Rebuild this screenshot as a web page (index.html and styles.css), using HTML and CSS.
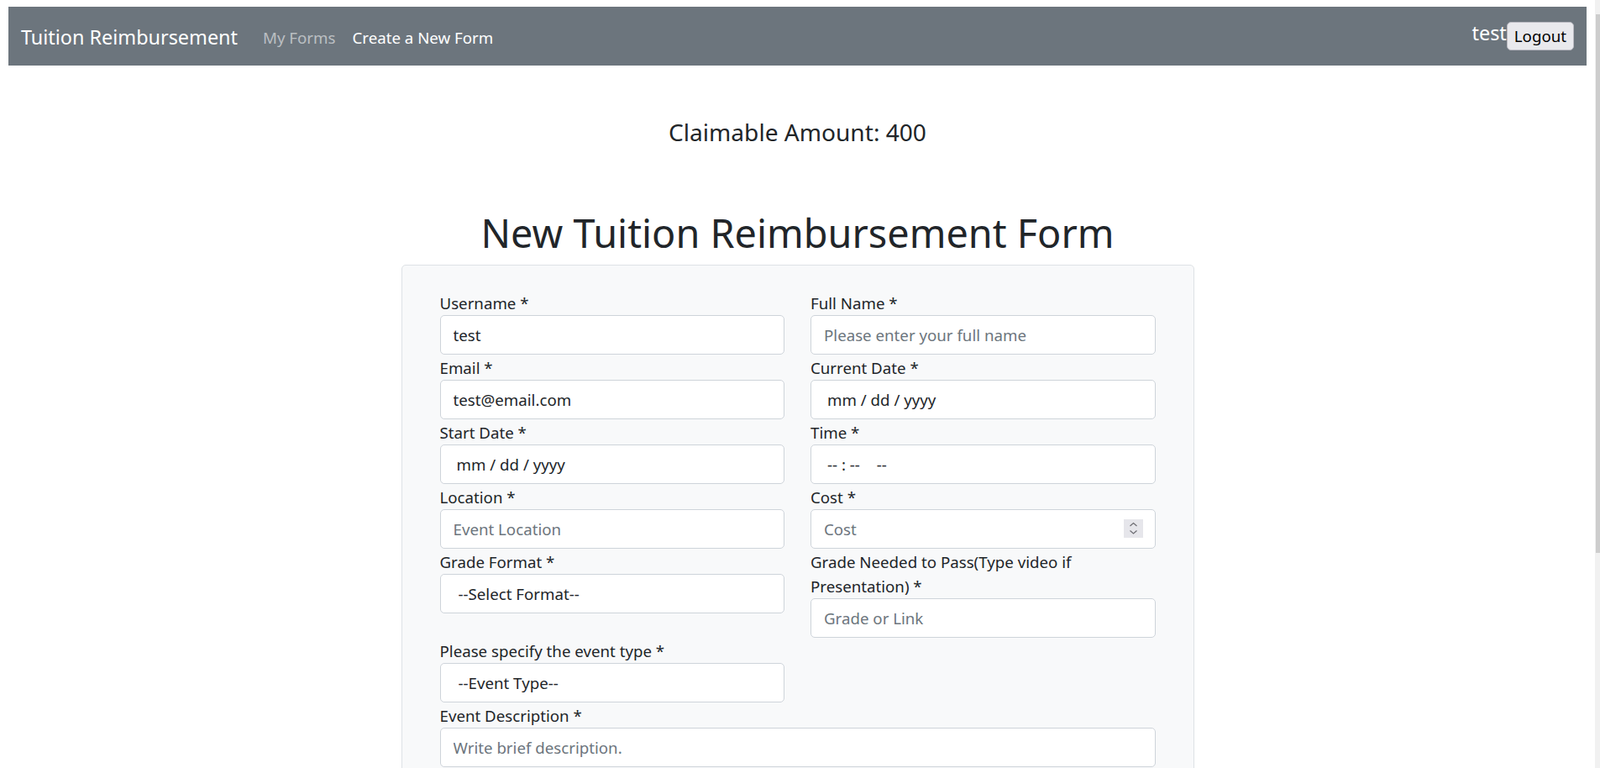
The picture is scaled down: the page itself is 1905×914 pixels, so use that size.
FILE: index.html
```html
<!DOCTYPE html>
<html lang="en">
<head>
<meta charset="utf-8">
<title>Tuition Reimbursement</title>
<link rel="stylesheet" href="styles.css">
</head>
<body>
<nav class="navbar">
  <div class="nav-left">
    <a class="brand" href="#">Tuition Reimbursement</a>
    <ul class="nav-links">
      <li><a class="nav-link" href="#">My Forms</a></li>
      <li><a class="nav-link active" href="#">Create a New Form</a></li>
    </ul>
  </div>
  <div class="nav-right">
    <span class="nav-user">test</span>
    <button class="logout-btn" type="button">Logout</button>
  </div>
</nav>

<main class="main">
  <h4 class="claimable">Claimable Amount: 400</h4>
  <h1 class="form-title">New Tuition Reimbursement Form</h1>

  <form class="form-card">
    <div class="form-grid">
      <div class="field">
        <label class="field-label" for="username">Username *</label>
        <input class="field-control" id="username" type="text" value="test">
      </div>
      <div class="field">
        <label class="field-label" for="fullname">Full Name *</label>
        <input class="field-control" id="fullname" type="text" placeholder="Please enter your full name">
      </div>

      <div class="field">
        <label class="field-label" for="email">Email *</label>
        <input class="field-control" id="email" type="text" value="test@email.com">
      </div>
      <div class="field">
        <span class="field-label">Current Date *</span>
        <div class="field-control date-control"><span class="date-text">mm / dd / yyyy</span></div>
      </div>

      <div class="field">
        <span class="field-label">Start Date *</span>
        <div class="field-control date-control"><span class="date-text">mm / dd / yyyy</span></div>
      </div>
      <div class="field">
        <span class="field-label">Time *</span>
        <div class="field-control date-control"><span class="time-text">-- : --</span><span class="time-ampm">--</span></div>
      </div>

      <div class="field">
        <label class="field-label" for="location">Location *</label>
        <input class="field-control" id="location" type="text" placeholder="Event Location">
      </div>
      <div class="field">
        <label class="field-label" for="cost">Cost *</label>
        <div class="control-wrap">
          <input class="field-control" id="cost" type="text" placeholder="Cost">
          <span class="spinner" aria-hidden="true">
            <svg width="23" height="22" viewBox="0 0 23 22">
              <polyline points="7.5,8 11.5,4.5 15.5,8" fill="none" stroke="#6d6d73" stroke-width="1.2"/>
              <polyline points="7.5,13.5 11.5,17 15.5,13.5" fill="none" stroke="#6d6d73" stroke-width="1.2"/>
            </svg>
          </span>
        </div>
      </div>

      <div class="field">
        <label class="field-label" for="gradeformat">Grade Format *</label>
        <select class="field-control select-control" id="gradeformat">
          <option>--Select Format--</option>
        </select>
      </div>
      <div class="field">
        <label class="field-label" for="grade">Grade Needed to Pass(Type video if Presentation) *</label>
        <input class="field-control" id="grade" type="text" placeholder="Grade or Link">
      </div>

      <div class="field">
        <label class="field-label" for="eventtype">Please specify the event type *</label>
        <select class="field-control select-control" id="eventtype">
          <option>--Event Type--</option>
        </select>
      </div>

      <div class="field field-wide">
        <label class="field-label" for="description">Event Description *</label>
        <input class="field-control" id="description" type="text" placeholder="Write brief description.">
      </div>
    </div>
  </form>
</main>

<div class="scrollbar" aria-hidden="true"><div class="scrollbar-thumb"></div></div>
</body>
</html>
```

FILE: styles.css
```css
* {
  box-sizing: border-box;
}

html,
body {
  margin: 0;
}

body {
  padding: 8px 16px 0 10px;
  font-family: "Noto Sans", "Open Sans", "Liberation Sans", sans-serif;
  font-size: 18.7px;
  line-height: 30px;
  color: #212529;
  background: #ffffff;
  overflow: hidden;
}

/* ---------- navbar ---------- */
.navbar {
  display: flex;
  align-items: center;
  justify-content: space-between;
  height: 70px;
  padding: 0 15px;
  background: #6c757d;
}

.nav-left {
  display: flex;
  align-items: center;
  padding-top: 4px;
}

.brand {
  margin-right: 20px;
  font-size: 23.4px;
  line-height: 37.5px;
  color: #ffffff;
  text-decoration: none;
}

.nav-links {
  display: flex;
  margin: 0;
  padding: 0;
  list-style: none;
}

.nav-link {
  display: block;
  padding: 10px;
  font-size: 18.7px;
  line-height: 30px;
  color: rgba(255, 255, 255, 0.55);
  text-decoration: none;
}

.nav-link.active {
  color: #ffffff;
}

.nav-right {
  display: flex;
  align-items: center;
}

.nav-user {
  margin-bottom: 7px;
  font-size: 23.4px;
  line-height: 37.5px;
  color: #ffffff;
}

.logout-btn {
  height: 34px;
  padding: 1px 8px;
  font-family: inherit;
  font-size: 18.7px;
  line-height: 30px;
  color: #000000;
  background: #e9e9ed;
  border: 1px solid #b8b8c0;
  border-radius: 5px;
}

/* ---------- headings ---------- */
.claimable {
  margin: 61px 0 0;
  font-size: 28.1px;
  line-height: 36px;
  font-weight: 400;
  text-align: center;
}

.form-title {
  margin: 72px 0 8px;
  font-size: 46.8px;
  line-height: 60px;
  font-weight: 400;
  text-align: center;
}

/* ---------- form card ---------- */
.form-card {
  width: 944px;
  margin: 0 auto;
  padding: 29px 45px 40px;
  background: #f8f9fa;
  border: 1px solid #dee2e6;
  border-radius: 5px;
}

.form-grid {
  display: grid;
  grid-template-columns: 1fr 1fr;
  column-gap: 31px;
  align-items: start;
}

.field-wide {
  grid-column: 1 / -1;
}

.field-label {
  display: block;
  padding-top: 1px;
  line-height: 29px;
}

.field-control {
  display: block;
  width: 100%;
  height: 47px;
  padding: 7.5px 15px;
  font-family: inherit;
  font-size: 18.7px;
  line-height: 30px;
  color: #212529;
  background: #ffffff;
  border: 1px solid #ced4da;
  border-radius: 5px;
  outline: none;
}

.field-control::placeholder {
  color: #6c757d;
  opacity: 1;
}

.date-control {
  padding-left: 19px;
}

.time-text {
  white-space: pre;
}

.time-ampm {
  margin-left: 20px;
}

.select-control {
  padding-left: 21px;
  appearance: none;
  -webkit-appearance: none;
}

.control-wrap {
  position: relative;
}

.spinner {
  position: absolute;
  top: 12px;
  right: 15px;
  width: 23px;
  height: 22px;
  background: #e6e6eb;
}

.spinner svg {
  display: block;
}

/* ---------- faux window scrollbar ---------- */
.scrollbar {
  position: fixed;
  top: 0;
  right: 0;
  width: 6px;
  height: 100%;
  background: #f1f1f1;
}

.scrollbar-thumb {
  position: absolute;
  top: 17px;
  left: 1px;
  right: 0;
  height: 641px;
  background: #cdcdcd;
}
```
